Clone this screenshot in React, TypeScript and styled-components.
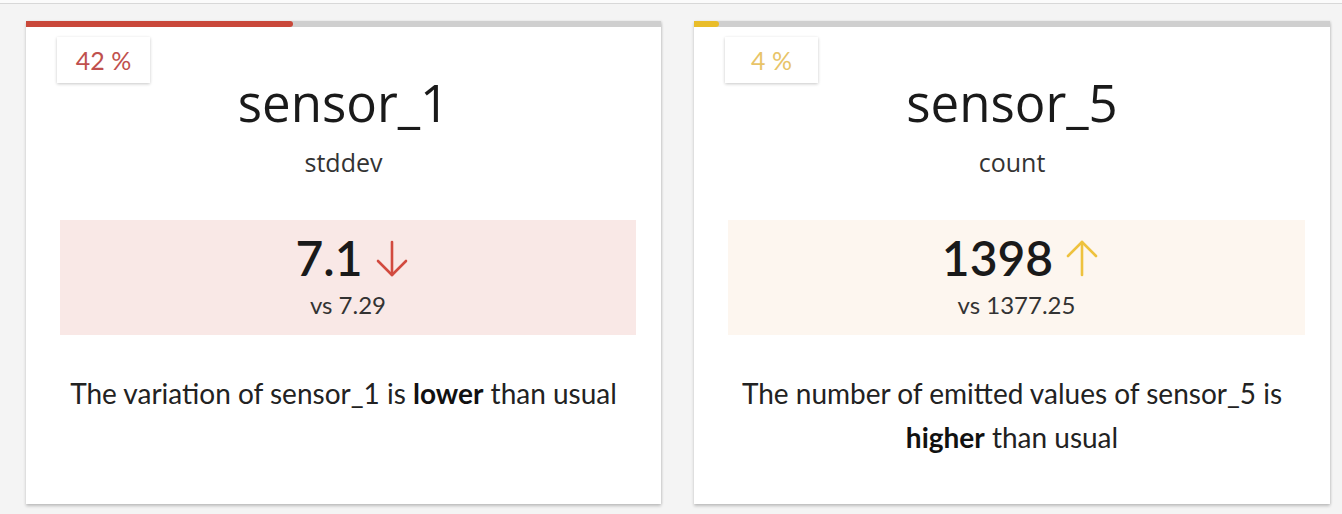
import React from "react";
import styled, { createGlobalStyle } from "styled-components";

const GlobalStyle = createGlobalStyle`
  html, body { margin: 0; padding: 0; }
  body {
    background: #f4f4f4;
    font-family: Lato, "Open Sans", sans-serif;
    color: #222;
  }
`;

const Page = styled.div`
  width: 1342px;
  height: 514px;
  overflow: hidden;
`;

const TopRule = styled.div`
  height: 3px;
  background: #fbfbfb;
  border-bottom: 1px solid #d8d8d8;
`;

const Grid = styled.div`
  display: grid;
  grid-template-columns: 635px 636px;
  column-gap: 33px;
  padding: 17px 12px 0 26px;
`;

const Card = styled.div`
  position: relative;
  height: 483px;
  background: #fff;
  box-shadow: 0 2px 3px rgba(0, 0, 0, 0.22), 1px 0 2px rgba(0, 0, 0, 0.08);
  display: flex;
  flex-direction: column;
  align-items: center;
`;

const Bar = styled.div`
  align-self: stretch;
  height: 6px;
  background: #cfcfcf;
  display: flex;
`;

const BarFill = styled.div<{ $color: string }>`
  height: 100%;
  background: ${(p) => p.$color};
  border-radius: 0 3px 3px 0;
`;

const Badge = styled.div<{ $color: string }>`
  position: absolute;
  top: 16px;
  left: 31px;
  width: 93px;
  height: 46px;
  background: #fff;
  box-shadow: 0 1px 3px rgba(0, 0, 0, 0.22);
  display: flex;
  align-items: center;
  justify-content: center;
  font-size: 25px;
  color: ${(p) => p.$color};
`;

const Title = styled.div`
  margin-top: 47px;
  font-family: "Open Sans", sans-serif;
  font-size: 51px;
  line-height: 56px;
  color: #1a1a1a;
`;

const Metric = styled.div`
  margin-top: 18px;
  font-family: "Open Sans", sans-serif;
  font-size: 25px;
  line-height: 28px;
  color: #333;
`;

const ValueBox = styled.div<{ $bg: string }>`
  margin-top: 44px;
  align-self: stretch;
  margin-left: 34px;
  margin-right: 25px;
  height: 115px;
  background: ${(p) => p.$bg};
  display: flex;
  flex-direction: column;
  align-items: center;
  padding-top: 12px;
  box-sizing: border-box;
`;

const ValueRow = styled.div`
  display: flex;
  align-items: center;
  gap: 12px;
  height: 52px;
  padding-left: 8px;
`;

const Value = styled.span`
  font-family: Lato, sans-serif;
  font-weight: 600;
  font-size: 48px;
  line-height: 52px;
  color: #1a1a1a;
`;

const Versus = styled.div`
  margin-top: 7px;
  font-size: 24px;
  line-height: 28px;
  color: #333;
`;

const Description = styled.p`
  margin: 36px 34px 0 34px;
  font-size: 28px;
  line-height: 44px;
  text-align: center;
  color: #222;

  b {
    font-weight: 700;
    color: #111;
  }
`;

const TrendArrow = ({ up, color }: { up: boolean; color: string }) => (
  <svg width="34" height="37" viewBox="0 0 34 37" fill="none">
    <g
      stroke={color}
      strokeWidth="2.6"
      strokeLinecap="round"
      strokeLinejoin="round"
      transform={up ? "rotate(180 17 18.5)" : undefined}
    >
      <path d="M17 2 V35" />
      <path d="M3 21 L17 35 L31 21" />
    </g>
  </svg>
);

type Item = {
  pct: number;
  color: string;
  badge: string;
  arrowColor: string;
  boxBg: string;
  name: string;
  metric: string;
  value: string;
  ref: string;
  up: boolean;
  before: string;
  strong: string;
};

const items: Item[] = [
  {
    pct: 42,
    color: "#c9483a",
    badge: "#c0504d",
    arrowColor: "#d24a3f",
    boxBg: "#f9e8e6",
    name: "sensor_1",
    metric: "stddev",
    value: "7.1",
    ref: "vs 7.29",
    up: false,
    before: "The variation of sensor_1 is ",
    strong: "lower",
  },
  {
    pct: 4,
    color: "#e9bd2a",
    badge: "#e8c468",
    arrowColor: "#eec23e",
    boxBg: "#fdf6ef",
    name: "sensor_5",
    metric: "count",
    value: "1398",
    ref: "vs 1377.25",
    up: true,
    before: "The number of emitted values of sensor_5 is ",
    strong: "higher",
  },
];

export default function App() {
  return (
    <Page>
      <GlobalStyle />
      <TopRule />
      <Grid>
        {items.map((it) => (
          <Card key={it.name}>
            <Bar>
              <BarFill $color={it.color} style={{ width: `${it.pct}%` }} />
            </Bar>
            <Badge $color={it.badge}>{it.pct} %</Badge>
            <Title>{it.name}</Title>
            <Metric>{it.metric}</Metric>
            <ValueBox $bg={it.boxBg}>
              <ValueRow>
                <Value>{it.value}</Value>
                <TrendArrow up={it.up} color={it.arrowColor} />
              </ValueRow>
              <Versus>{it.ref}</Versus>
            </ValueBox>
            <Description>
              {it.before}
              <b>{it.strong}</b> than usual
            </Description>
          </Card>
        ))}
      </Grid>
    </Page>
  );
}
